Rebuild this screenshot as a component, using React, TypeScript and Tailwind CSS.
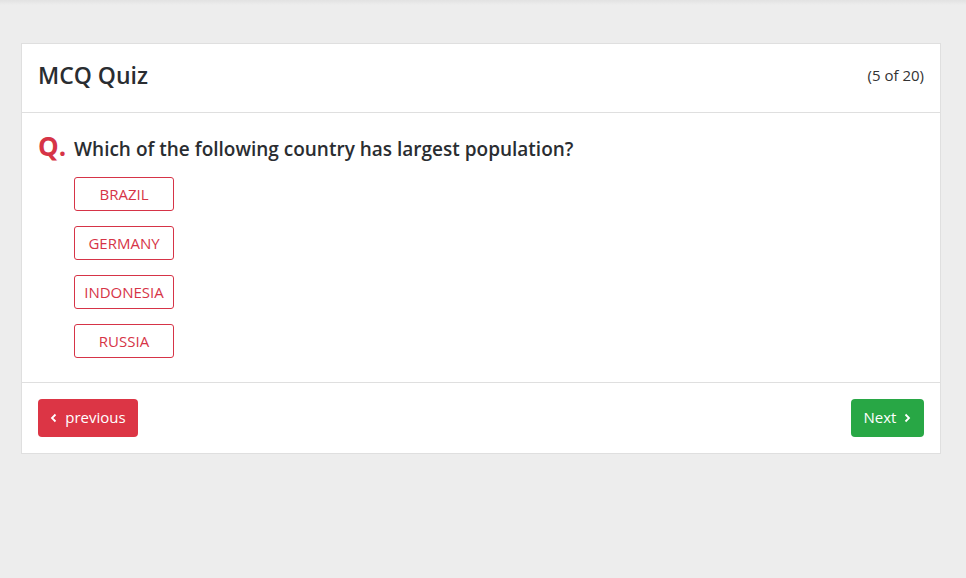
import React from "react";

const options = ["BRAZIL", "GERMANY", "INDONESIA", "RUSSIA"];

const App = () => {
  return (
    <div
      className="min-h-[578px] w-full bg-[#ededed] relative"
      style={{ fontFamily: '"Open Sans", "Noto Sans", sans-serif' }}
    >
      {/* top shadow */}
      <div className="absolute top-0 left-0 right-0 h-[5px] bg-gradient-to-b from-[#e2e2e2] to-[#ededed]" />

      <div className="pt-[43px] pl-[21px]">
        <div className="w-[920px] bg-white border border-[#dfdfdf]">
          {/* HEADER */}
          <div className="flex items-center justify-between h-[69px] px-4 pb-[5px] border-b border-[#dfdfdf]">
            <h1 className="text-[23px] font-semibold text-[#2a2d31]">MCQ Quiz</h1>
            <span className="text-[15px] text-[#333]">(5 of 20)</span>
          </div>

          {/* BODY */}
          <div className="px-4 pt-[20px] pb-[24px] border-b border-[#dfdfdf]">
            <div className="flex items-baseline gap-[8px]">
              <span className="text-[26px] font-bold text-[#d63447] leading-none">Q.</span>
              <span className="text-[19px] font-semibold text-[#2a2d31] leading-none">
                Which of the following country has largest population?
              </span>
            </div>
            <div className="flex flex-col gap-[15px] mt-[18px] pl-[36px]">
              {options.map((o) => (
                <button
                  key={o}
                  className="w-[100px] h-[34px] border border-[#d63447] rounded-[3px] text-[15px] text-[#d63447] bg-white"
                >
                  {o}
                </button>
              ))}
            </div>
          </div>

          {/* FOOTER */}
          <div className="flex items-center justify-between px-4 py-4">
            <button className="flex items-center gap-[7px] h-[38px] w-[100px] justify-center rounded-[4px] bg-[#dc3545] text-white text-[15px]">
              <svg width="8" height="10" viewBox="0 0 8 10" fill="none">
                <path d="M5.5 1.5 L2 5 L5.5 8.5" stroke="white" strokeWidth="1.8" />
              </svg>
              <span className="-mt-[2px]">previous</span>
            </button>
            <button className="flex items-center gap-[7px] h-[38px] w-[73px] justify-center rounded-[4px] bg-[#28a745] text-white text-[15px]">
              <span className="-mt-[2px]">Next</span>
              <svg width="8" height="10" viewBox="0 0 8 10" fill="none">
                <path d="M2.5 1.5 L6 5 L2.5 8.5" stroke="white" strokeWidth="1.8" />
              </svg>
            </button>
          </div>
        </div>
      </div>
    </div>
  );
};

export default App;
